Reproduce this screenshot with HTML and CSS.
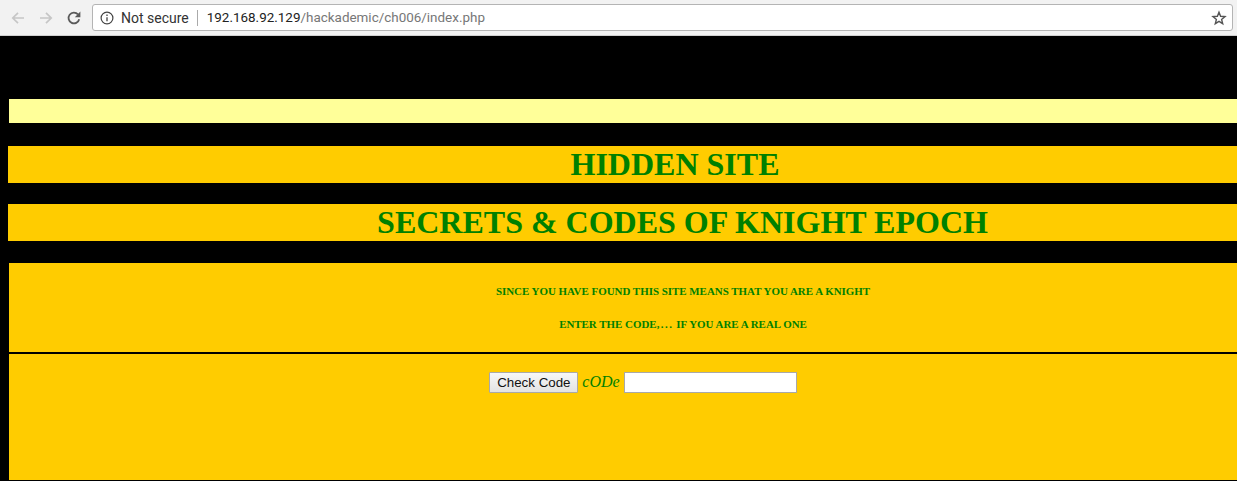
FILE: index.html
```html
<!DOCTYPE html>
<html lang="en">
<head>
<meta charset="utf-8">
<title>Hidden Site</title>
<link rel="stylesheet" href="styles.css">
</head>
<body>
<header class="toolbar">
  <svg class="nav-icon" viewBox="0 0 16 16" width="16" height="16"><path d="M14 8H3M8 2.8 2.8 8 8 13.2" fill="none" stroke="#c6c6c6" stroke-width="1.7"/></svg>
  <svg class="nav-icon" viewBox="0 0 16 16" width="16" height="16"><path d="M2 8h11M8 2.8 13.2 8 8 13.2" fill="none" stroke="#c6c6c6" stroke-width="1.7"/></svg>
  <svg class="nav-icon" viewBox="0 0 16 16" width="16" height="16"><path d="M13.2 9.2A5.4 5.4 0 1 1 12 4.4" fill="none" stroke="#5a5a5a" stroke-width="1.8"/><path d="M14.4 1.6v5.6H8.8z" fill="#5a5a5a"/></svg>
  <div class="omnibox">
    <svg class="info" viewBox="0 0 14 14" width="14" height="14"><circle cx="7" cy="7" r="5.9" fill="none" stroke="#444" stroke-width="1.2"/><path d="M7 6.2v4M7 3.6v1.5" stroke="#444" stroke-width="1.3"/></svg>
    <span class="secure">Not secure</span>
    <span class="divider"></span>
    <span class="url"><span class="host">192.168.92.129</span>/hackademic/ch006/index.php</span>
    <svg class="star" viewBox="0 0 16 16" width="16" height="16"><path d="M8 2.2 9.6 6.3l4.4.3-3.4 2.8 1.1 4.3L8 11.3l-3.7 2.4 1.1-4.3L2 6.6l4.4-.3z" fill="none" stroke="#555" stroke-width="1.4"/></svg>
  </div>
</header>
<main class="page">
  <div class="notice"></div>
  <h1 class="banner banner-first">HIDDEN SITE</h1>
  <h1 class="banner banner-second">SECRETS &amp; CODES OF KNIGHT EPOCH</h1>
  <section class="intro">
    <p>SINCE YOU HAVE FOUND THIS SITE MEANS THAT YOU ARE A KNIGHT</p>
    <p>ENTER THE CODE<span class="dots">,...</span> IF YOU ARE A REAL ONE</p>
  </section>
  <form class="code-form">
    <button type="button" class="check">Check Code</button>
    <em class="code-label">cODe</em>
    <input type="text" class="code-input">
  </form>
</main>
</body>
</html>
```
FILE: styles.css
```css
html, body {
  margin: 0;
  padding: 0;
  height: 481px;
  overflow: hidden;
  background: #000;
}
.toolbar {
  height: 35px;
  border-bottom: 1px solid #d0d0d0;
  background: #f2f2f2;
  display: flex;
  align-items: center;
  box-sizing: content-box;
  padding-left: 10px;
  gap: 12px;
}
.nav-icon {
  flex: none;
}
.omnibox {
  width: 1141px;
  height: 27px;
  margin-left: -2px;
  padding: 0 5px 0 7px;
  box-sizing: border-box;
  display: flex;
  align-items: center;
  background: #fff;
  border: 1px solid #b4b4b4;
  border-radius: 3px;
  font: 13.45px "Roboto", "Liberation Sans", sans-serif;
  color: #777;
}
.secure {
  margin-left: 7px;
  color: #333;
  font-size: 14px;
}
.divider {
  width: 1px;
  height: 16px;
  margin: 0 9px 0 8px;
  background: #aaa;
}
.url {
  flex: 1;
}
.host {
  color: #222;
}
.page {
  width: 1349px;
  padding: 63px 0 0 8px;
}
.notice {
  height: 24px;
  margin-left: 1px;
  background: #ffff99;
}
.banner {
  margin: 0;
  height: 37px;
  background: #ffcc00;
  color: #008000;
  font: bold 32px/37px "Liberation Serif", "Times New Roman", serif;
  text-align: center;
}
.banner-first {
  margin-top: 23px;
  padding-right: 15px;
}
.banner-second {
  margin-top: 21px;
}
.intro {
  height: 89px;
  margin: 22px 0 0 1px;
  padding-top: 22px;
  box-sizing: border-box;
  background: #ffcc00;
  color: #008000;
  text-align: center;
  font: bold 10.93px/13px "Liberation Serif", "Times New Roman", serif;
}
.intro p {
  margin: 0 0 20px;
}
.dots {
  letter-spacing: 1.5px;
}
.code-form {
  height: 126px;
  margin: 2px 0 0 1px;
  padding: 18px 80px 0 0;
  box-sizing: border-box;
  background: #ffcc00;
  display: flex;
  justify-content: center;
  align-items: flex-start;
  gap: 4px;
}
.check {
  width: 89px;
  height: 21px;
  margin: 0;
  padding: 0;
  border: 1px solid #a9a9a9;
  border-radius: 1px;
  background: linear-gradient(#f7f7f7, #e3e3e3);
  color: #111;
  font: 13.33px "Liberation Sans", Arial, sans-serif;
}
.code-label {
  color: #008000;
  font: italic 16px/20px "Liberation Serif", "Times New Roman", serif;
}
.code-input {
  width: 173px;
  height: 21px;
  margin: 0;
  padding: 0;
  box-sizing: border-box;
  border: 1px solid #a9a9a9;
  background: #fff;
}
```
